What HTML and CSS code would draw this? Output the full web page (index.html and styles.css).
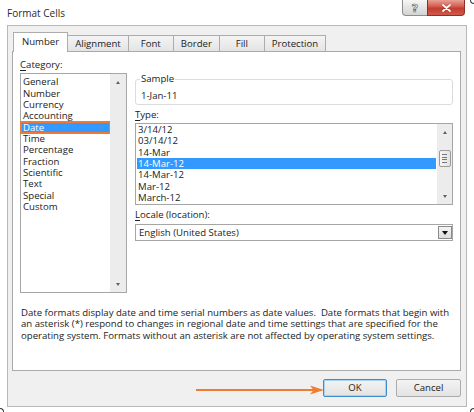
FILE: index.html
```html
<!DOCTYPE html>
<html>
<head>
<meta charset="utf-8">
<title>Format Cells</title>
<link rel="stylesheet" href="styles.css">
</head>
<body>
<div class="window">
  <div class="titlebar">
    <div class="title">Format Cells</div>
    <div class="caption-btns">
      <div class="cbtn help">?</div>
      <div class="cbtn close">
        <svg width="9" height="8" viewBox="0 0 9 8"><path d="M1 1 L8 7 M8 1 L1 7" stroke="#6b1f19" stroke-width="3" stroke-linecap="round" opacity="0.35"/><path d="M1 1 L8 7 M8 1 L1 7" stroke="#fff" stroke-width="1.8" stroke-linecap="round"/></svg>
      </div>
    </div>
  </div>
  <div class="client">
    <div class="tabs">
      <div class="tab active">Number</div>
      <div class="tab">Alignment</div>
      <div class="tab">Font</div>
      <div class="tab">Border</div>
      <div class="tab">Fill</div>
      <div class="tab">Protection</div>
    </div>
    <div class="panel">
      <div class="cols">
        <div class="left">
          <div class="label"><u>C</u>ategory:</div>
          <div class="listbox cat">
            <div class="items">
              <div class="item">General</div>
              <div class="item">Number</div>
              <div class="item">Currency</div>
              <div class="item">Accounting</div>
              <div class="item sel mark">Date</div>
              <div class="item">Time</div>
              <div class="item">Percentage</div>
              <div class="item">Fraction</div>
              <div class="item">Scientific</div>
              <div class="item">Text</div>
              <div class="item">Special</div>
              <div class="item">Custom</div>
            </div>
            <div class="vscroll">
              <div class="sarrow"><span class="tri up"></span></div>
              <div class="sarrow bottom"><span class="tri down"></span></div>
            </div>
          </div>
        </div>
        <div class="right">
          <fieldset class="sample">
            <legend>Sample</legend>
            <div class="sample-value">1-Jan-11</div>
          </fieldset>
          <div class="label gap"><u>T</u>ype:</div>
          <div class="listbox type">
            <div class="items">
              <div class="item">3/14/12</div>
              <div class="item">03/14/12</div>
              <div class="item">14-Mar</div>
              <div class="item sel">14-Mar-12</div>
              <div class="item">14-Mar-12</div>
              <div class="item">Mar-12</div>
              <div class="item">March-12</div>
            </div>
            <div class="vscroll narrow">
              <div class="sarrow"><span class="tri up"></span></div>
              <div class="thumb"><span></span><span></span><span></span><span></span></div>
              <div class="sarrow bottom"><span class="tri down"></span></div>
            </div>
          </div>
          <div class="label gap"><u>L</u>ocale (location):</div>
          <div class="combo">
            <div class="combo-text">English (United States)</div>
            <div class="combo-btn"><span class="tri down big"></span></div>
          </div>
        </div>
      </div>
      <p class="desc">Date formats display date and time serial numbers as date values.&nbsp; Date formats that begin with an asterisk (*) respond to changes in regional date and time settings that are specified for the operating system. Formats without an asterisk are not affected by operating system settings.</p>
    </div>
    <div class="buttons">
      <div class="btn default">OK</div>
      <div class="btn cancel">Cancel</div>
    </div>
  </div>
  <svg class="arrow" width="130" height="12" viewBox="0 0 130 12">
    <path d="M0 6 H122" stroke="#f07c33" stroke-width="2"/>
    <path d="M128 6 L114 1.5 L117.5 6 L114 10.5 Z" fill="#f07c33"/>
  </svg>
  <span class="corner tl"></span>
  <span class="corner tr"></span>
  <span class="corner bl"></span>
  <span class="corner br"></span>
</div>
</body>
</html>
```

FILE: styles.css
```css
* { box-sizing: border-box; }
html, body { margin: 0; padding: 0; }
body {
  background: #fff;
  font-family: "Open Sans", "Noto Sans", sans-serif;
  font-size: 9.6px;
  color: #222;
}
.window {
  position: relative;
  width: 474px;
  height: 412px;
  overflow: hidden;
}

/* title bar */
.titlebar {
  height: 25px;
  display: flex;
  justify-content: space-between;
  align-items: flex-start;
  padding: 0 9px 0 7px;
}
.title {
  font-size: 10px;
  line-height: 14px;
  padding-top: 6px;
  color: #2b2b2b;
}
.caption-btns { display: flex; }
.cbtn {
  height: 16px;
  display: flex;
  align-items: center;
  justify-content: center;
}
.help {
  width: 25px;
  border: 1px solid #8e8e8e;
  border-top: none;
  border-right: none;
  border-radius: 0 0 0 4px;
  background: linear-gradient(#f7f7f7, #e4e4e4 50%, #d4d4d4);
  font-family: "DejaVu Sans", sans-serif;
  font-weight: bold;
  font-size: 11px;
  color: #f2f2f2;
  -webkit-text-stroke: 0.7px #6a6a6a;
  padding-top: 1px;
}
.close {
  width: 38px;
  border: 1px solid #8f2f28;
  border-top: none;
  border-radius: 0 0 4px 0;
  background: linear-gradient(#e8a196, #d4594a 45%, #c23c31 55%, #cf5a4c);
}

/* client area */
.client {
  margin-left: 7px;
  width: 460px;
  height: 382px;
  border: 1px solid #b8b8b8;
  background: #f0f0f0;
  padding: 6px 5px 0 4px;
}

.tabs {
  display: flex;
  align-items: flex-end;
  padding-left: 1px;
}
.tab {
  height: 16px;
  min-width: 46px;
  padding: 0 7px;
  margin-left: -1px;
  border: 1px solid #acacac;
  border-bottom: none;
  background: linear-gradient(#f4f4f4, #e4e4e4);
  display: flex;
  align-items: center;
  justify-content: center;
  line-height: 14px;
  color: #222;
}
.tab.active {
  height: 20px;
  margin-left: 0;
  margin-bottom: -1px;
  padding: 0 8px 2px;
  background: #fff;
  position: relative;
  z-index: 1;
}

.panel {
  height: 320px;
  border: 1px solid #a9a9a9;
  background: #fff;
  padding: 0 7px;
}
.cols {
  display: grid;
  grid-template-columns: 107px 318px;
  column-gap: 8px;
}
.left { padding-top: 6px; }
.right { padding-top: 20px; }
.label { line-height: 14px; }
.label.gap { margin-top: 3px; }
.label u { text-decoration-thickness: 1px; text-underline-offset: 1.5px; }

.listbox {
  display: flex;
  border: 1px solid #a6a6a6;
  background: #fff;
  margin-top: 1px;
}
.listbox.cat { height: 220px; }
.listbox.type { height: 82px; }
.items { flex: 1; min-width: 0; }
.cat .items { padding-top: 2.3px; }
.type .items { padding: 0 1px; }
.item {
  line-height: 11.33px;
  height: 11.33px;
  white-space: nowrap;
}
.cat .item { padding-left: 2px; }
.type .item { padding-left: 1px; }
.item.sel {
  background: #3399ff;
  color: #fff;
}
.item.mark {
  outline: 2px solid #ef7a36;
  outline-offset: -1px;
}

.vscroll {
  width: 16px;
  background: #ececec;
  display: flex;
  flex-direction: column;
  align-items: center;
}
.vscroll.narrow { width: 15px; }
.sarrow {
  width: 100%;
  height: 16px;
  display: flex;
  align-items: center;
  justify-content: center;
}
.sarrow.bottom { margin-top: auto; }
.tri {
  width: 0;
  height: 0;
  border-left: 2.5px solid transparent;
  border-right: 2.5px solid transparent;
}
.tri.up { border-bottom: 3px solid #606060; }
.tri.down { border-top: 3px solid #606060; }
.tri.big {
  border-left-width: 3.5px;
  border-right-width: 3.5px;
  border-top: 4px solid #111;
}
.thumb {
  width: 12px;
  height: 17px;
  margin-top: 10px;
  border: 1px solid #9b9b9b;
  border-radius: 2px;
  background: linear-gradient(90deg, #f6f6f6, #e2e2e2);
  display: flex;
  flex-direction: column;
  align-items: center;
  justify-content: center;
  gap: 1.5px;
}
.thumb span {
  width: 5px;
  height: 1px;
  background: #777;
}

.sample {
  margin: 0;
  padding: 3px 4px 1px 4px;
  border: 1px solid #dadcdf;
  border-radius: 3px;
  min-width: 0;
}
.sample legend {
  padding: 0 1px;
  line-height: 14px;
}
.sample-value {
  line-height: 14px;
  padding-left: 1px;
}

.combo {
  margin-top: 2px;
  height: 17px;
  border: 1px solid #a6a6a6;
  background: #fff;
  display: flex;
  align-items: center;
}
.combo-text {
  flex: 1;
  padding-left: 3px;
  line-height: 14px;
}
.combo-btn {
  width: 14px;
  height: 13px;
  margin: 0 0 0 auto;
  border: 1px solid #8a8a8a;
  background: linear-gradient(#f5f5f5, #dcdcdc);
  display: flex;
  align-items: center;
  justify-content: center;
}

.desc {
  margin: 14px 0 0;
  padding-left: 1px;
  line-height: 11.3px;
  width: 436px;
}

.buttons {
  display: flex;
  justify-content: flex-end;
  gap: 9px;
  margin-top: 8px;
}
.btn {
  height: 18px;
  border: 1px solid #acacac;
  border-radius: 2px;
  background: linear-gradient(#f3f3f3, #e3e3e3);
  display: flex;
  align-items: center;
  justify-content: center;
  line-height: 14px;
}
.btn.default {
  width: 64px;
  border-color: #3f8ccb;
  box-shadow: inset 0 0 0 1px #a9d3f2;
}
.btn.cancel { width: 65px; }

.arrow {
  position: absolute;
  left: 196px;
  top: 384px;
}

.corner {
  position: absolute;
  width: 6px;
  height: 6px;
  border-color: #333;
  border-style: solid;
  border-width: 0;
}
.corner.tl { left: -2px; top: -2px; border-right-width: 1.5px; border-bottom-width: 1.5px; border-radius: 0 0 4px 0; transform: rotate(180deg); }
.corner.tr { right: -2px; top: -2px; border-left-width: 1.5px; border-bottom-width: 1.5px; border-radius: 0 0 0 4px; }
.corner.bl { left: -2px; bottom: -2px; border-right-width: 1.5px; border-top-width: 1.5px; border-radius: 0 4px 0 0; }
.corner.br { right: -2px; bottom: -2px; border-left-width: 1.5px; border-top-width: 1.5px; border-radius: 4px 0 0 0; }
```
